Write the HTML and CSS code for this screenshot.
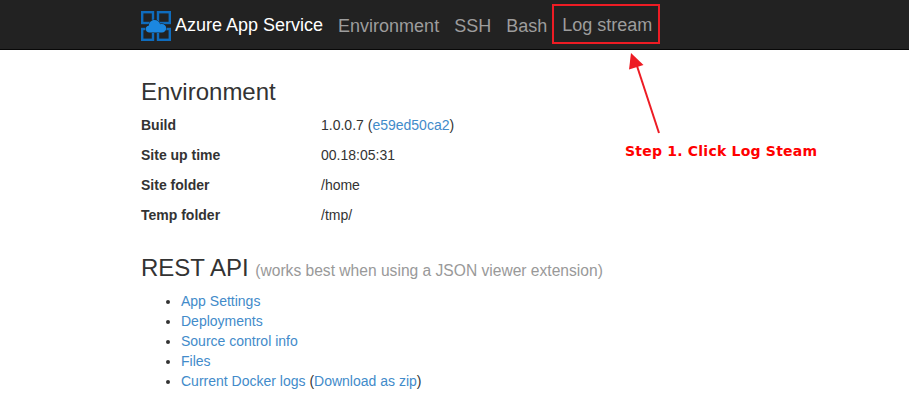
FILE: index.html
```html
<!DOCTYPE html>
<html lang="en">
<head>
<meta charset="utf-8">
<title>Azure App Service</title>
<link rel="stylesheet" href="styles.css">
</head>
<body>
<nav class="navbar">
  <div class="container nav-inner">
    <a class="brand" href="#">
      <svg class="logo" width="30" height="30" viewBox="0 0 30 30">
        <g fill="none" stroke="#0f6cbd" stroke-width="2.400">
          <rect x="1.200" y="1.200" width="10.800" height="10.800"/>
          <rect x="17" y="1.200" width="11.800" height="10.800"/>
          <rect x="1.200" y="18" width="10.800" height="10.800"/>
          <rect x="17" y="18" width="11.800" height="10.800"/>
        </g>
        <path d="M8.500 21.500c-2.300 0-3.800-1.500-3.800-3.400 0-1.900 1.300-3.200 3-3.400 .5-3.400 2.800-5.700 5.800-5.700 2.800 0 4.900 1.800 5.600 4.300 .6-.3 1.200-.4 1.800-.4 2.500 0 4.300 1.900 4.300 4.300 0 2.500-1.900 4.300-4.200 4.300z" fill="#1b87e0" stroke="#222" stroke-width="1" paint-order="stroke"/>
      </svg>
      <span>Azure App Service</span>
    </a>
    <a class="nav-link" href="#">Environment</a>
    <a class="nav-link" href="#">SSH</a>
    <a class="nav-link" href="#">Bash</a>
    <a class="nav-link nav-boxed" href="#">Log stream</a>
  </div>
</nav>
<main class="container">
  <h3 class="env-title">Environment</h3>
  <div class="row"><strong class="key">Build</strong><span>1.0.0.7 (<a href="#">e59ed50ca2</a>)</span></div>
  <div class="row"><strong class="key">Site up time</strong><span>00.18:05:31</span></div>
  <div class="row"><strong class="key">Site folder</strong><span>/home</span></div>
  <div class="row"><strong class="key">Temp folder</strong><span>/tmp/</span></div>
  <h3 class="api-title">REST API <small>(works best when using a JSON viewer extension)</small></h3>
  <ul class="api-list">
    <li><a href="#">App Settings</a></li>
    <li><a href="#">Deployments</a></li>
    <li><a href="#">Source control info</a></li>
    <li><a href="#">Files</a></li>
    <li><a href="#">Current Docker logs</a> (<a href="#">Download as zip</a>)</li>
  </ul>
</main>
<svg class="arrow" width="50" height="90" viewBox="0 0 50 90">
  <path d="M34 83L12 16" stroke="#ed1c24" stroke-width="2" fill="none"/>
  <path d="M6 3L4 19.500L18.500 15z" fill="#ed1c24"/>
</svg>
<div class="callout">Step 1. Click Log Steam</div>
</body>
</html>
```
FILE: styles.css
```css
* { box-sizing: border-box; }
html, body { margin: 0; padding: 0; }
body {
  position: relative;
  height: 408px;
  overflow: hidden;
  background: #fff;
  color: #333;
  font-family: "Liberation Sans", Arial, sans-serif;
  font-size: 14px;
  line-height: 20px;
}
a { color: #428bca; text-decoration: none; }
.container { width: 750px; margin-left: 126px; padding: 0 15px; }
.navbar { height: 50px; background: #222; border-bottom: 1px solid #080808; }
.nav-inner { display: flex; align-items: center; height: 49px; }
.brand { display: flex; align-items: center; gap: 4px; color: #fff; font-size: 18px; }
.logo { display: block; margin-top: 3px; }
.brand span { margin-top: 1px; }
.nav-link { color: #9d9d9d; font-size: 18px; margin-left: 15px; margin-top: 2px; }
.nav-boxed {
  display: flex;
  align-items: center;
  height: 40px;
  margin-left: 5px;
  margin-top: -1px;
  padding: 2px 6px 0 8px;
  border: 2px solid #ed1c24;
}
.env-title, .api-title { font-weight: 500; font-size: 24px; line-height: 26px; margin: 0; color: #333; }
.env-title { margin-top: 29px; margin-bottom: 5px; }
.row { display: flex; height: 30px; align-items: center; }
.key { width: 180px; font-weight: 700; }
.api-title { margin-top: 25px; margin-bottom: 7px; }
.api-title small { font-size: 15.6px; font-weight: 400; color: #999; }
.api-list { margin: 0; padding-left: 40px; }
.arrow { position: absolute; left: 625px; top: 50px; }
.callout {
  position: absolute;
  left: 625px;
  top: 141px;
  font-family: "DejaVu Sans", Verdana, sans-serif;
  font-size: 14px;
  font-weight: 700;
  letter-spacing: .22px;
  color: #f00;
  white-space: nowrap;
}
```
